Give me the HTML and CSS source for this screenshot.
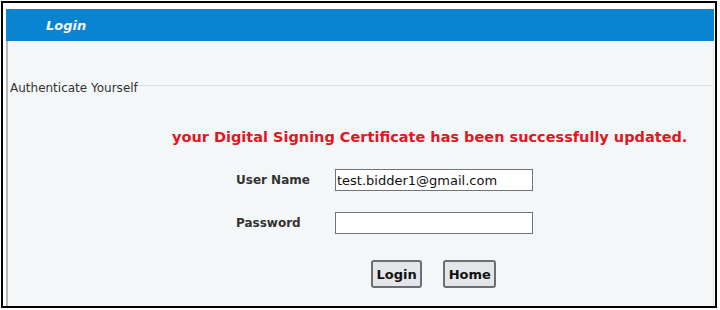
FILE: index.html
```html
<!DOCTYPE html>
<html>
<head>
<meta charset="utf-8">
<title>Login</title>
<link rel="stylesheet" href="styles.css">
</head>
<body>
<div class="frame">
  <div class="header"><span class="header-title">Login</span></div>
  <div class="panel">
    <div class="section-title"><span class="legend">Authenticate Yourself</span><span class="rule"></span></div>
    <div class="message">your Digital Signing Certificate has been successfully updated.</div>
    <div class="form">
      <label class="label" for="user">User Name</label>
      <input class="field" id="user" type="text" value="test.bidder1@gmail.com">
      <label class="label" for="pass">Password</label>
      <input class="field" id="pass" type="password" value="">
    </div>
    <div class="actions">
      <button class="btn" type="button">Login</button>
      <button class="btn" type="button">Home</button>
    </div>
  </div>
</div>
</body>
</html>
```

FILE: styles.css
```css
html, body {
  margin: 0;
  padding: 0;
  background: #ffffff;
}
body {
  padding: 1px 0 0 1px;
  font-family: "DejaVu Sans", Verdana, sans-serif;
}
.frame {
  box-sizing: border-box;
  width: 716px;
  height: 307px;
  border: 2px solid #000;
  padding: 6px 1px 0 3px;
  display: flex;
  flex-direction: column;
  background: #fff;
}
.header {
  height: 32px;
  background: #0884d0;
  display: flex;
  align-items: center;
  flex-shrink: 0;
}
.header-title {
  padding-left: 40px;
  font-size: 13px;
  font-weight: bold;
  font-style: italic;
  color: #f2f8ff;
}
.panel {
  flex: 1;
  background: #f4f7f7;
  border-left: 2px solid #b3bbb7;
  border-right: 1px solid #e4e8e8;
  padding-top: 40px;
}
.section-title {
  display: flex;
  align-items: flex-start;
  padding-left: 2px;
}
.legend {
  font-size: 12px;
  line-height: 14px;
  color: #333;
}
.rule {
  flex: 1;
  margin-top: 4px;
  border-top: 1px solid #dcdfe0;
}
.message {
  margin-top: 32px;
  padding-left: 164px;
  font-size: 14.5px;
  line-height: 20px;
  font-weight: bold;
  color: #e3151f;
}
.form {
  margin-top: 22px;
  padding-left: 228px;
  display: grid;
  grid-template-columns: 99px 198px;
  grid-auto-rows: 22px;
  row-gap: 21px;
  align-items: center;
}
.label {
  font-size: 12px;
  font-weight: bold;
  color: #333;
}
.field {
  box-sizing: border-box;
  width: 198px;
  height: 22px;
  margin: 0;
  padding: 0 1px;
  border: 1px solid #6f7479;
  background: #fff;
  font-family: "DejaVu Sans", Verdana, sans-serif;
  font-size: 13px;
  color: #111;
}
.actions {
  margin-top: 26px;
  padding-left: 363px;
  display: flex;
  gap: 21px;
}
.btn {
  box-sizing: border-box;
  height: 28px;
  margin: 0;
  padding: 0 3.5px;
  border: 2px solid #6b6e72;
  border-radius: 3px;
  background: #e4e6ea;
  font-family: "DejaVu Sans", Verdana, sans-serif;
  font-size: 13px;
  font-weight: bold;
  color: #111;
}
```
